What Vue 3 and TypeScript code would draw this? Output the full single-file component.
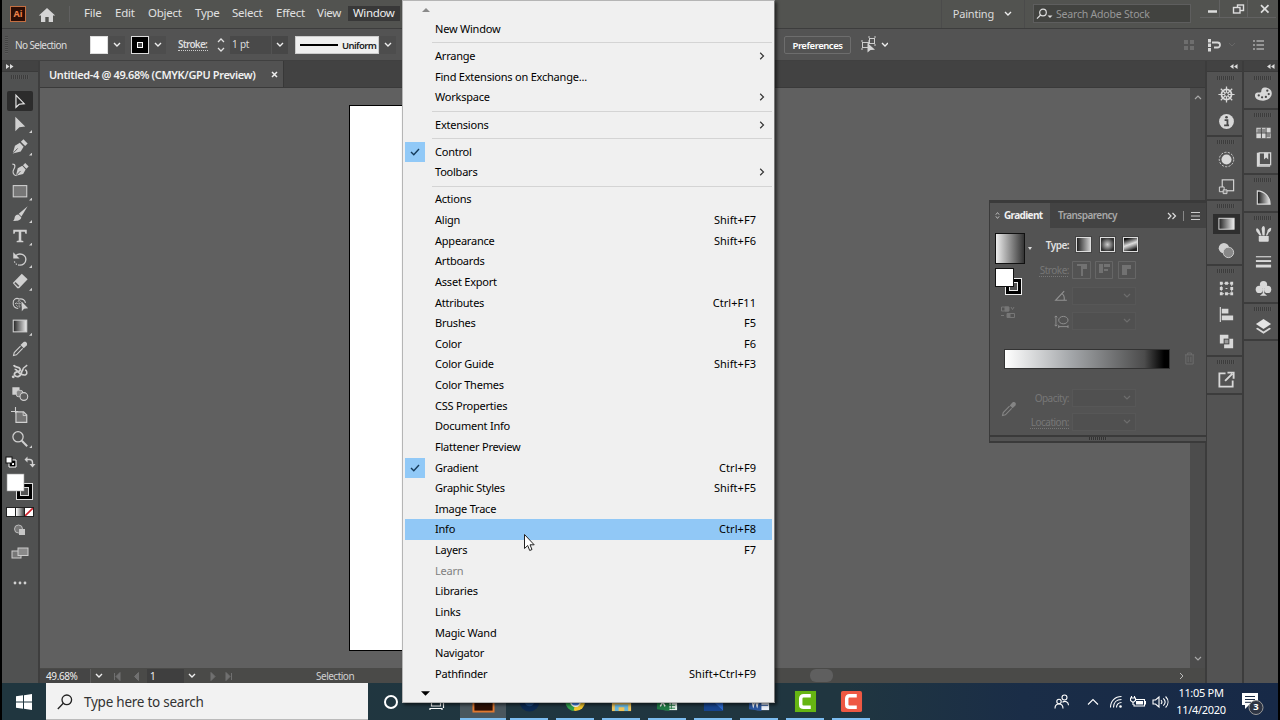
<script setup lang="ts">
interface MenuRow { label?: string; key?: string; sub?: boolean; checked?: boolean; hot?: boolean; off?: boolean; sep?: boolean }
interface Tool { name: string; art: string; more?: boolean; active?: boolean }
interface DockIcon { name: string; art: string; active?: boolean }

const menus = [
  { t: 'File', w: 31 }, { t: 'Edit', w: 33 }, { t: 'Object', w: 47 }, { t: 'Type', w: 37 },
  { t: 'Select', w: 44 }, { t: 'Effect', w: 41 }, { t: 'View', w: 32 }, { t: 'Window', w: 52, open: true },
]

const rows: MenuRow[] = [
  { label: 'New Window' }, { sep: true },
  { label: 'Arrange', sub: true }, { label: 'Find Extensions on Exchange...' }, { label: 'Workspace', sub: true }, { sep: true },
  { label: 'Extensions', sub: true }, { sep: true },
  { label: 'Control', checked: true }, { label: 'Toolbars', sub: true }, { sep: true },
  { label: 'Actions' }, { label: 'Align', key: 'Shift+F7' }, { label: 'Appearance', key: 'Shift+F6' },
  { label: 'Artboards' }, { label: 'Asset Export' }, { label: 'Attributes', key: 'Ctrl+F11' },
  { label: 'Brushes', key: 'F5' }, { label: 'Color', key: 'F6' }, { label: 'Color Guide', key: 'Shift+F3' },
  { label: 'Color Themes' }, { label: 'CSS Properties' }, { label: 'Document Info' }, { label: 'Flattener Preview' },
  { label: 'Gradient', key: 'Ctrl+F9', checked: true }, { label: 'Graphic Styles', key: 'Shift+F5' },
  { label: 'Image Trace' }, { label: 'Info', key: 'Ctrl+F8', hot: true }, { label: 'Layers', key: 'F7' },
  { label: 'Learn', off: true }, { label: 'Libraries' }, { label: 'Links' }, { label: 'Magic Wand' },
  { label: 'Navigator' }, { label: 'Pathfinder', key: 'Shift+Ctrl+F9' },
]

const tools: Tool[] = [
  { name: 'selection', active: true, art: '<path d="M5.5 3.5V17l3.6-3.4 5.6-.6z" fill="none" stroke="#e8e8e8" stroke-width="1.3"/>' },
  { name: 'direct', more: true, art: '<path d="M4.800 2V18l4.500-4.500 6.500-.8z" fill="#d0d0d0"/>' },
  { name: 'pen', more: true, art: '<path d="M2 18.300l2.400-8.600 5.400-3.300 4.200 4.300-3.200 5.300z" fill="#d0d0d0"/><path d="M2.600 17.700l4.800-5" stroke="#535353"/><path d="M11 5.400l2.800-2.800 4.700 4.700-2.800 2.800z" fill="#d0d0d0"/>' },
  { name: 'curvature', art: '<path d="M5.500 17.500l2-8.200 5-2.800 3.800 4-2.800 5z" fill="#d0d0d0"/><path d="M13.300 5.700l2.500-2.500 3.800 4-2.500 2.400z" fill="#d0d0d0"/><path d="M6 17l4.600-4.800" stroke="#535353"/><path d="M1.500 4.500c4 0 3 3.500 1.500 6s-1 6 3 7" fill="none" stroke="#d0d0d0" stroke-width="1.300"/>' },
  { name: 'rectangle', more: true, art: '<rect x="2.500" y="4" width="15" height="12.500" fill="#777" stroke="#d0d0d0" stroke-width="1.200"/>' },
  { name: 'brush', more: true, art: '<path d="M18.500 1.500L8.600 9.800l3 3z" fill="#d0d0d0"/><path d="M8.200 10.500l3.200 3.200c-.3 3.500-4.700 4.400-9.400 3.900 2.200-1 1.600-3.100 2.400-4.900.8-1.500 2.300-2.400 3.800-2.200z" fill="#d0d0d0"/>' },
  { name: 'type', more: true, art: '<path d="M2.500 3h15v4.500H16l-.7-2.300h-3.900v9.900l2.300.5v1.300H6.300v-1.300l2.300-.5V5.200H4.700L4 7.500H2.500z" fill="#d0d0d0"/>' },
  { name: 'rotate', more: true, art: '<path d="M5.500 6.200c4-3.500 11-1.200 11 4.300 0 4-3.500 6.500-7 6.300" fill="none" stroke="#d0d0d0" stroke-width="1.500"/><path d="M9.500 16.800c-3 0-5.500-2.200-6-5.300" fill="none" stroke="#d0d0d0" stroke-width="1.300" stroke-dasharray="1.500 1.500"/><path d="M2.500 2.500v7h7z" fill="#d0d0d0"/>' },
  { name: 'eraser', more: true, art: '<path d="M2 12.200L12 2l6.500 6-9.500 10H7z" fill="#d0d0d0"/><path d="M5 11.200l4.300 4.200-1.400 1.400-4.200-4.200z" fill="#5a5a5a"/>' },
  { name: 'shape-builder', art: '<path d="M2.500 9a4.300 4.300 0 0 1 6.500-4.500c4-1 7 1.500 7 4.500M8 15c-3.500 0-6-2.500-5.500-6" fill="none" stroke="#d0d0d0" stroke-width="1.200"/><path d="M4.500 9.500h8M9 5.500v8" stroke="#d0d0d0" stroke-width="1" stroke-dasharray="1 1"/><circle cx="9" cy="10" r="3.300" fill="none" stroke="#d0d0d0" stroke-dasharray="1 1"/><path d="M12 7.500V18l2.500-2.800 4.500-.4z" fill="#d0d0d0"/>' },
  { name: 'gradient', more: true, art: '<defs><linearGradient id="tg"><stop stop-color="#222"/><stop offset="1" stop-color="#eee"/></linearGradient></defs><rect x="2.500" y="3.500" width="15" height="13" fill="url(#tg)" stroke="#d0d0d0" stroke-width="1.200"/>' },
  { name: 'eyedropper', art: '<path d="M10.500 5.600l3.200-3.200c2.800-1.500 5.200 1.200 3.700 3.700L14.200 9.300z" fill="#d0d0d0"/><path d="M10.600 6.800l-7 7.200-.8 3.200 3.200-.8 7-7.200" fill="none" stroke="#d0d0d0" stroke-width="1.200"/>' },
  { name: 'puppet', art: '<path d="M3 3.500c1 3 6 1.500 7 4s-1 3-3.500 3.500S2.500 14 5 15.500s5 .5 6-2 1-5 3-5.500" fill="none" stroke="#d0d0d0" stroke-width="2"/><path d="M4 8c3 0 3 3 5.500 4.500s5 3 7 1.500 1-5-1-5" fill="none" stroke="#d0d0d0" stroke-width="1.700"/><path d="M13 7.500l5-4" stroke="#d0d0d0" stroke-width="1.500"/><circle cx="2.500" cy="16.500" r="1.600" fill="#d0d0d0"/>' },
  { name: 'blend', art: '<path d="M1.500 2.500h8v3.200H7.500v5h-6z" fill="#d0d0d0"/><rect x="6" y="6" width="7" height="7" rx="2" fill="#888" stroke="#ccc"/><circle cx="14.300" cy="12.800" r="4.300" fill="#5c5c5c" stroke="#d0d0d0" stroke-width="1.200"/>' },
  { name: 'artboard', art: '<path d="M5 0v7M0 5h8" stroke="#d0d0d0" stroke-width="1.200"/><path d="M5.500 5.500h8.500l3.500 3.500v8h-12z" fill="#747474" stroke="#d0d0d0" stroke-width="1.300"/><path d="M13.500 5.500v4h4" fill="none" stroke="#d0d0d0"/>' },
  { name: 'zoom', more: true, art: '<circle cx="7.800" cy="7.600" r="5.700" fill="none" stroke="#d0d0d0" stroke-width="1.400"/><path d="M12 12l6 6" stroke="#d0d0d0" stroke-width="2.200"/>' },
]

const dockA: DockIcon[][] = [
  [
    { name: 'navigator', art: '<circle cx="10" cy="10" r="5.300" fill="none" stroke="#d8d8d8" stroke-width="1.900"/><path d="M10 1.500v17M1.500 10h17M4 4l12 12M16 4L4 16" stroke="#d8d8d8" stroke-width="1.300"/><circle cx="10" cy="10" r="2" fill="#535353" stroke="#d8d8d8"/>' },
    { name: 'info', art: '<circle cx="10" cy="10" r="7.800" fill="#d8d8d8"/><path d="M8 8.500h3v5M7.500 14h5.200" fill="none" stroke="#484848" stroke-width="1.900"/><circle cx="10" cy="5.500" r="1.400" fill="#484848"/>' },
  ],
  [
    { name: 'appearance', art: '<circle cx="10" cy="10" r="5.300" fill="#d8d8d8"/><circle cx="10" cy="10" r="7.600" fill="none" stroke="#d8d8d8" stroke-dasharray="2.200 1.500"/>' },
    { name: 'export', art: '<rect x="5.500" y="3" width="12" height="11.500" fill="none" stroke="#d8d8d8" stroke-width="1.200"/><path d="M2.500 10.500h5v5h-5z" fill="#535353" stroke="#d8d8d8"/><path d="M6.500 13.500h4v4h-4z" fill="#777" stroke="#d8d8d8"/>' },
  ],
  [
    { name: 'gradient', active: true, art: '<defs><linearGradient id="dg"><stop stop-color="#222"/><stop offset="1" stop-color="#eee"/></linearGradient></defs><rect x="2" y="4.500" width="16" height="11.500" fill="url(#dg)" stroke="#ddd"/>' },
    { name: 'transparency', art: '<circle cx="7.300" cy="7.500" r="5.500" fill="#d0d0d0"/><circle cx="12" cy="12" r="5.500" fill="#888" stroke="#d0d0d0"/>' },
  ],
  [
    { name: 'transform', art: '<rect x="4.500" y="4.500" width="11" height="11" fill="none" stroke="#d8d8d8" stroke-dasharray="2 1"/><path d="M3 3h3v3H3zM14 3h3v3h-3zM3 14h3v3H3zM14 14h3v3h-3zM8.500 3h3v3h-3zM8.500 14h3v3h-3zM3 8.500h3v3H3zM14 8.500h3v3h-3z" fill="#d8d8d8"/><path d="M9 10h2" stroke="#d8d8d8"/>' },
    { name: 'align', art: '<path d="M3.500 2v16" stroke="#d8d8d8" stroke-width="1.200"/><path d="M5 4h7v5H5zM5 11h12v5H5z" fill="#d8d8d8"/>' },
    { name: 'pathfinder', art: '<path d="M3 3h9v4h5v10H7.500v-5H3z" fill="#d8d8d8"/><rect x="7.500" y="7.500" width="5" height="5" fill="#999" stroke="#444"/>' },
  ],
  [{ name: 'asset', art: '<path d="M9 3.500H2.500v14h14V11" fill="none" stroke="#d8d8d8" stroke-width="1.900"/><path d="M8.500 11.500L16 4M11 2.800h6.500v6.500" fill="none" stroke="#d8d8d8" stroke-width="2"/>' }],
]

const dockB: DockIcon[][] = [
  [{ name: 'color', art: '<path d="M11 2.500c5 0 8 3 7.700 6.800-.5 4.500-4.300 7.200-9.200 7.200-5.300 0-8.500-2.500-8.500-5.500 0-2.200 1.500-3.400 3.500-3.200 2 .3 3.500-.2 3.200-2C8 4 9 2.500 11 2.500z" fill="#d8d8d8"/><g fill="#484848"><circle cx="5" cy="11" r="1.200"/><circle cx="8.500" cy="13" r="1.200"/><circle cx="12.500" cy="12.500" r="1.200"/><circle cx="15.500" cy="9.500" r="1.200"/><circle cx="14" cy="6" r="1.200"/></g>' }],
  [
    { name: 'swatches', art: '<rect x="2.500" y="5" width="15" height="11" fill="#d8d8d8"/><path d="M3.500 6h4v4h-4zM13 11h4v4h-4zM8.500 6h3.500v4H8.500z" fill="#888"/><path d="M2.500 10.500h15M7.800 5v11M12.700 5v11" stroke="#484848"/>' },
    { name: 'libraries', art: '<path d="M3 3h2.500v13H17v1.500H3z" fill="#d8d8d8"/><rect x="5.500" y="3" width="12" height="12.500" fill="none" stroke="#d8d8d8" stroke-width="1.300"/><path d="M10.500 3h4.500v7l-2.200-2-2.300 2z" fill="#d8d8d8"/>' },
  ],
  [{ name: 'guide', art: '<defs><linearGradient id="qg"><stop stop-color="#111"/><stop offset="1" stop-color="#eee"/></linearGradient></defs><path d="M3.500 3c7 0 13.500 6 13.500 14H3.500z" fill="url(#qg)" stroke="#d8d8d8" stroke-width="1.200"/>' }],
  [
    { name: 'brushes', art: '<path d="M5 11.500h10.500v5q0 1-1 1H6q-1 0-1-1zM6 11L2.500 6.500q-1-3 1-3Q6 5 6.500 8L8 11zM9 11L8 4q.5-3 2-3t1.500 3l-.3 7zM12.500 11l1.500-4q0-3 4-4 .5 4-2.500 5L14 11z" fill="#d8d8d8"/>' },
    { name: 'stroke', art: '<path d="M2 5h16" stroke="#d8d8d8" stroke-width="1.200"/><path d="M2 9.500h16" stroke="#d8d8d8" stroke-width="2"/><path d="M2 14.800h16" stroke="#d8d8d8" stroke-width="3"/>' },
    { name: 'symbols', art: '<circle cx="10" cy="5.800" r="3.800" fill="#d8d8d8"/><circle cx="5.600" cy="11" r="3.800" fill="#d8d8d8"/><circle cx="14.400" cy="11" r="3.800" fill="#d8d8d8"/><path d="M9.200 8h1.600v7l3 2.500H6.200l3-2.500z" fill="#d8d8d8"/>' },
  ],
  [{ name: 'layers', art: '<path d="M10 2l8 5.300-8 5.200-8-5.200z" fill="#e4e4e4"/><path d="M3.800 11.200L10 15.200l6.200-4L18 12.400l-8 5.300-8-5.300z" fill="#d8d8d8"/>' }],
]

const apps = [
  { name: 'ai', front: true, art: '<rect x="1.500" y="1.500" width="21" height="21" fill="#2b0f05" stroke="#e0782e" stroke-width="2"/>' },
  { name: 'ps', art: '<circle cx="12" cy="12" r="10.500" fill="#0c2a52"/><circle cx="12" cy="12" r="5" fill="#1d4a80"/>' },
  { name: 'chrome', art: '<circle cx="12" cy="12" r="10" fill="#f2c62e"/><path d="M12 12L3 7a10 10 0 0 0 7 15z" fill="#2fa04c"/><path d="M3 7a10 10 0 0 1 18 0z" fill="#dc4437"/><circle cx="12" cy="12" r="5" fill="#4486f4" stroke="#fff" stroke-width="1.500"/>' },
  { name: 'explorer', art: '<path d="M2 4h20v18H2z" fill="#eec35a"/><path d="M5 15h14v7h-4v-4H9v4H5z" fill="#67b6dc"/>' },
  { name: 'excel', art: '<rect x="9" y="2" width="13" height="19" fill="#e7f2eb"/><path d="M11 16h9M11 19h9M16 8v12" stroke="#237a45"/><path d="M1 4l13-2v20L1 20z" fill="#1f7a44"/><path d="M4.500 8l5 9M9.500 8l-5 9" stroke="#fff" stroke-width="1.500"/>' },
  { name: 'mail', art: '<path d="M2 3h20v19z" fill="#2c67c8"/><path d="M2 3v19h20z" fill="#17448d"/>' },
  { name: 'word', art: '<rect x="9" y="2" width="13" height="19" fill="#e9eef7"/><path d="M13 8h8M13 12h8M13 16h8" stroke="#244f94"/><path d="M1 4l13-2v20L1 20z" fill="#2a569d"/><path d="M3.500 9l2 8 2-6 2 6 2-8" fill="none" stroke="#fff" stroke-width="1.300"/>' },
  { name: 'camtasia', art: '<rect x="1" y="1" width="22" height="22" fill="#66b512"/><path d="M17.500 6h-7.500q-3 0-3 3v6q0 3 3 3h7.500" fill="none" stroke="#fff" stroke-width="3.600"/>' },
  { name: 'recorder', art: '<rect x="1" y="1" width="22" height="22" rx="2" fill="#ee5843"/><path d="M17.500 6h-7.500q-3 0-3 3v6q0 3 3 3h7.500" fill="none" stroke="#fff" stroke-width="3.600"/>' },
]
</script>

<template>
  <div class="screen">
    <header class="titlebar">
      <span class="ai">Ai</span>
      <svg class="home" viewBox="0 0 18 16"><path d="M9 1L.8 8.500H3V15h4.300v-5h3.400v5H15V8.500h2.200z" fill="#d4d4d4" /></svg>
      <i class="vline" />
      <nav class="menus">
        <span v-for="m in menus" :key="m.t" :class="{ open: m.open }" :style="{ width: m.w + 'px' }">{{ m.t }}</span>
      </nav>
      <div class="titleright">
        <div class="painting"><span>Painting</span><svg viewBox="0 0 8 6"><path d="M1 1l3 3 3-3" /></svg></div>
        <div class="stock">
          <svg viewBox="0 0 18 12"><circle cx="7" cy="4.500" r="3.300" /><path d="M4.600 7L1 10.700" /><path d="M11.500 7.500h5l-2.500 2.500z" fill="#ddd" stroke="none" /></svg>
          <span>Search Adobe Stock</span>
        </div>
        <svg class="winbtns" viewBox="0 0 78 28">
          <path d="M19.500 0v17M47.500 0v17M0 17.500h76" stroke="#626262" fill="none" />
          <path d="M8 11.500h9" stroke="#ddd" stroke-width="2.500" />
          <g fill="#535353" stroke="#ddd" stroke-width="1.400"><rect x="37.500" y="5" width="6" height="5.500" /><rect x="33.500" y="7.500" width="6.500" height="5.500" /></g>
          <path d="M61 5.200l7.500 7.500M68.500 5.200L61 12.700" stroke="#ddd" stroke-width="1.700" />
        </svg>
      </div>
    </header>

    <div class="control">
      <i class="hgrip" />
      <span class="nosel">No Selection</span>
      <i class="fillbox" />
      <span class="drop"><svg viewBox="0 0 8 6"><path d="M1 1l3 3 3-3" /></svg></span>
      <i class="strokebox"><b /></i>
      <span class="drop"><svg viewBox="0 0 8 6"><path d="M1 1l3 3 3-3" /></svg></span>
      <span class="strokelabel">Stroke:</span>
      <svg class="spin" viewBox="0 0 10 16"><path d="M2 5l3-3 3 3M2 11l3 3 3-3" /></svg>
      <span class="pt">1 pt</span>
      <span class="drop pd"><svg viewBox="0 0 8 6"><path d="M1 1l3 3 3-3" /></svg></span>
      <span class="uniform"><i />Uniform</span>
      <span class="drop"><svg viewBox="0 0 8 6"><path d="M1 1l3 3 3-3" /></svg></span>
      <div class="ctlright">
        <span class="pref">Preferences</span>
        <svg class="seltool" viewBox="0 0 28 18"><g fill="none" stroke="#ccc"><rect x="2.500" y="6.500" width="6" height="5" /><rect x="9.500" y="2.500" width="5" height="5" /><path d="M1 5h2M8 5h2M1 13h2M8 1h2M14 1h2M14 9h2" /></g><path d="M7.500 7v9.500l3-2.500 4.500-.2z" fill="#d4d4d4" /><path d="M22 7l3 3 3-3" fill="none" stroke="#eee" stroke-width="1.400" /></svg>
        <svg class="ctlend" viewBox="0 0 84 16"><path d="M1 3h4v4H1zM7 3h4v4H7zM1 9h4v4H1zM7 9h4v4H7z" fill="#6e6e6e" /><path d="M25 2h3v3.500h-3zM25 6.500h3V10h-3zM25 11h3v3.500h-3z" fill="#d8d8d8" /><path d="M29 5.500h5.500a2.500 2.500 0 0 1 0 5H31" fill="none" stroke="#d8d8d8" stroke-width="1.800" /><path d="M46 6l3 3 3-3" fill="none" stroke="#666" /><path d="M70 4h2M70 8h2M70 12h2M73.500 4H81M73.500 8H81M73.500 12H81" stroke="#d8d8d8" stroke-width="1.200" /></svg>
      </div>
    </div>

    <main class="work">
      <aside class="toolbar">
        <div class="dockhead"><svg viewBox="0 0 8 5"><path d="M0 0l3.500 2.500L0 5zM4 0l3.500 2.500L4 5z" /></svg></div>
        <i class="grip" />
        <div class="tools">
          <div v-for="t in tools" :key="t.name" class="tool" :class="{ active: t.active }">
            <svg viewBox="0 0 20 20" v-html="t.art" />
            <i v-if="t.more" class="corner" />
          </div>
        </div>
        <div class="swaprow">
          <svg viewBox="0 0 12 12"><path d="M4 4h7v7H4z" fill="#000" stroke="#fff" /><path d="M7 7h2v2H7z" fill="#fff" /><rect x="1" y="1" width="6" height="6" fill="#fff" stroke="#111" /></svg>
          <svg viewBox="0 0 12 12"><path d="M3 3.500h2.500q3 0 3 3V9" fill="none" stroke="#d0d0d0" stroke-width="1.400" /><path d="M3.500.5v6L.5 3.500zM5.500 8h6l-3 3.500z" fill="#d0d0d0" /></svg>
        </div>
        <svg class="fillstroke" viewBox="0 0 28 28"><rect x="10.500" y="10.500" width="16" height="16" fill="#000" stroke="#ddd" /><rect x="14.500" y="14.500" width="8" height="8" fill="#535353" stroke="#ddd" /><rect x="1" y="1" width="17" height="17" fill="#fff" stroke="#999" stroke-width=".6" /></svg>
        <div class="modes"><i class="m1" /><i class="m2" /><svg viewBox="0 0 8 8"><rect width="8" height="8" fill="#fff" /><path d="M0 8L8 0" stroke="#d1222c" stroke-width="1.600" /></svg></div>
        <svg class="drawmode" viewBox="0 0 14 14"><circle cx="5.500" cy="6" r="4" fill="#777" stroke="#bbb" /><rect x="6" y="6" width="6" height="6" fill="#c6c6c6" /></svg>
        <svg class="screenmode" viewBox="0 0 18 12"><rect x="1" y="4" width="9" height="7" fill="#777" stroke="#ccc" /><rect x="7" y="1" width="10" height="7.500" fill="#8a8a8a" stroke="#ccc" /></svg>
        <svg class="dots" viewBox="0 0 14 4"><circle cx="2" cy="2" r="1.400" /><circle cx="7" cy="2" r="1.400" /><circle cx="12" cy="2" r="1.400" /></svg>
      </aside>

      <section class="doc">
        <div class="tabs">
          <div class="tab"><span>Untitled-4 @ 49.68% (CMYK/GPU Preview)</span><svg viewBox="0 0 7 7"><path d="M1 1l5 5M6 1L1 6" /></svg></div>
        </div>
        <div class="stage">
          <div class="canvas"><div class="artboard" /></div>
          <div class="vscroll">
            <svg viewBox="0 0 8 6"><path d="M1 5l3-3 3 3" /></svg>
            <svg viewBox="0 0 8 6"><path d="M1 1l3 3 3-3" /></svg>
          </div>
        </div>
        <div class="status">
          <span class="zoomval">49.68%</span>
          <span class="sdrop"><svg viewBox="0 0 8 6"><path d="M1 1l3 3 3-3" /></svg></span>
          <svg class="pager" viewBox="0 0 40 10"><path d="M8 2v7M13.500 1.500v8L9.500 5.500zM32 1.500v8L28 5.500z" /></svg>
          <span class="page">1</span>
          <span class="sdrop"><svg viewBox="0 0 8 6"><path d="M1 1l3 3 3-3" /></svg></span>
          <svg class="pager next" viewBox="0 0 40 10"><path d="M9.500 1.500v8L13.500 5.500zM24.500 1.500v8L28.500 5.500zM30 2v7" /></svg>
          <span class="sel">Selection</span>
          <i class="hthumb" />
          <svg class="harrow" viewBox="0 0 6 8"><path d="M1 1l3 3-3 3" /></svg>
        </div>
      </section>

      <aside v-for="(dock, d) in [dockA, dockB]" :key="d" class="dock">
        <div class="dockhead r"><svg viewBox="0 0 8 5"><path d="M3.500 0L0 2.500 3.500 5zM7.500 0L4 2.500 7.500 5z" /></svg></div>
        <div v-for="(g, n) in dock" :key="n" class="group">
          <i class="grip" />
          <div v-for="ic in g" :key="ic.name" class="dicon" :class="{ active: ic.active }"><svg viewBox="0 0 20 20" v-html="ic.art" /></div>
        </div>
      </aside>
    </main>

    <footer class="taskbar">
      <div class="start"><svg viewBox="0 0 16 16"><path d="M0 2.300L7 1.300v6.200H0zM8 1.200L16 0v7.500H8zM0 8.500h7v6.200L0 13.700zM8 8.500h8V16l-8-1.200z" fill="#fff" /></svg></div>
      <div class="search"><svg viewBox="0 0 16 16"><circle cx="9.800" cy="5.800" r="4.800" /><path d="M6.300 9.300L.8 15" /></svg><span>Type here to search</span></div>
      <div class="slot"><svg viewBox="0 0 16 16" class="cortana"><circle cx="8" cy="8" r="6" /></svg></div>
      <div class="slot tv"><svg viewBox="0 0 18 16" class="taskview"><path d="M3.500 4h9v8h-9zM15.500 2v12M2 0v1.500h12V0M2 16v-1.500h12V16" /></svg></div>
      <div v-for="a in apps" :key="a.name" class="slot app" :class="{ front: a.front }"><svg viewBox="0 0 24 24" v-html="a.art" /></div>
      <div class="tray">
        <svg class="people" viewBox="0 0 16 16"><circle cx="5" cy="7.500" r="2.200" /><path d="M1 14.500c0-6 8-6 8 0" /><circle cx="10.500" cy="3.500" r="2.500" /><path d="M8.500 8.300c2.500-2 6-.5 6 3" /></svg>
        <svg class="up" viewBox="0 0 12 8"><path d="M1 6.500l5-5 5 5" /></svg>
        <svg class="wifi" viewBox="0 0 14 14"><path d="M1.500 12.500C1.500 6 6 1.500 12.500 1.500M4.500 12.500c0-5 3-8 8-8M7.500 12.500c0-3 2-5 5-5" /><circle cx="11.500" cy="11.500" r="1.300" fill="#fff" stroke="none" /></svg>
        <svg class="batt" viewBox="0 0 16 12"><path d="M5 3.500h9.500V10H4V8M14.500 5.500h1v2.500h-1" /><path d="M6 5h7v3.500H6z" fill="#fff" stroke="none" /><path d="M1.500 0v2M4.500 0v2M.5 2h5v2.500l-2.500 2-2.500-2zM3 6v3" /></svg>
        <svg class="vol" viewBox="0 0 17 14"><path d="M1 5h2.500L7 2v10L3.500 9H1zM9 5c1.200 1.300 1.200 2.700 0 4M11.300 3.300c2.200 2.200 2.200 5.200 0 7.400M13.600 1.500c3.200 3.300 3.200 7.700 0 11" /></svg>
        <div class="clock"><span>11:05 PM</span><span>11/4/2020</span></div>
        <div class="note"><svg viewBox="0 0 24 24"><path d="M1 1h16v12h-9l-4 4v-4H1z" fill="#fff" /><path d="M4 4.500h10M4 7.500h10M4 10.300h6" stroke="#1a2b45" /><circle cx="15" cy="15.500" r="7" fill="#2d3443" stroke="#999" /></svg><b>3</b></div>
      </div>
    </footer>

    <section class="panel">
      <div class="phead">
        <div class="ptab"><svg viewBox="0 0 6 10"><path d="M1 4l2-2.500L5 4M1 6l2 2.500L5 6" /></svg><span>Gradient</span></div>
        <span class="ptrans">Transparency</span>
        <svg class="pmore" viewBox="0 0 34 12"><path d="M1 3l3 3-3 3M5.500 3l3 3-3 3" stroke="#ddd" stroke-width="1.200" /><path d="M16.500 1v10" stroke="#888" /><path d="M24 2.500h9M24 6h9M24 9.500h9" stroke="#ccc" /></svg>
      </div>
      <div class="pbody">
        <div class="pleft">
          <div class="swline"><i class="bigsw" /><i class="tri" /></div>
          <svg class="pfs" viewBox="0 0 28 28"><rect x="10.500" y="10.500" width="16" height="16" fill="#000" stroke="#eee" /><rect x="14.500" y="14.500" width="8" height="8" fill="#535353" stroke="#eee" /><rect x=".5" y=".5" width="18" height="18" fill="#fff" stroke="#111" /></svg>
          <svg class="rev" viewBox="0 0 14 12"><path d="M.5 1h7v4h-7zM6.500 7.500h7v4h-7zM10 1l1.500 2.500L13 1M0 9.500h3" /><path d="M4 1h4v4H4zM6 7.500h3v4H6z" fill="#777" /></svg>
        </div>
        <div class="pright">
          <div class="prow on"><label>Type:</label><i class="gt lin" /><i class="gt rad" /><i class="gt free" /></div>
          <div class="prow"><label class="ul">Stroke:</label>
            <svg class="stk" viewBox="0 0 64 18"><path d="M.5.500h18v17H.5zM23.500.500h17v17h-17zM46.500.500h17v17h-17z" fill="none" stroke="#666" /><path d="M5 3h10v5h-4v7H9V5H5zM27 3h4v9h-4zM32 3h6v3h-6zM32 8h4v2h-4zM50 4h9v4h-4v6h-5z" fill="#727272" /></svg>
          </div>
          <div class="prow"><label><svg viewBox="0 0 14 12"><path d="M12 10.500H1.500L9.500 2M7 4c2 1 3 3 2.500 6.500" /></svg></label><span class="fld"><svg viewBox="0 0 8 6"><path d="M1 1l3 3 3-3" /></svg></span></div>
          <div class="prow"><label><svg viewBox="0 0 16 14"><ellipse cx="10" cy="5.500" rx="5" ry="4" /><path d="M2 1v11M.5 2.500L2 1l1.500 1.500M.5 10.500L2 12l1.500-1.500M5 12.500h10M5 11v3M15 11v3" /></svg></label><span class="fld"><svg viewBox="0 0 8 6"><path d="M1 1l3 3 3-3" /></svg></span></div>
        </div>
      </div>
      <div class="rampline"><i class="ramp" /><svg viewBox="0 0 12 14"><path d="M1 3h10M4 3V1h4v2M2 3v10h8V3M4.500 5v6M7.500 5v6" /></svg></div>
      <div class="plow">
        <svg viewBox="0 0 20 20"><path d="M10.800 6l3-3.200c2.500-1.500 4.800 1 3.400 3.200L14 9.200z" fill="#858585" /><path d="M10.600 6.800l-7 7.200-.8 3.200 3.200-.8 7-7.200" fill="none" stroke="#858585" stroke-width="1.200" /></svg>
        <div>
          <div class="prow"><label>Opacity:</label><span class="fld"><svg viewBox="0 0 8 6"><path d="M1 1l3 3 3-3" /></svg></span></div>
          <div class="prow"><label class="ul">Location:</label><span class="fld"><svg viewBox="0 0 8 6"><path d="M1 1l3 3 3-3" /></svg></span></div>
        </div>
      </div>
      <div class="pfoot"><i /></div>
    </section>

    <div class="dropdown">
      <div class="more"><svg viewBox="0 0 8 4"><path d="M0 4l4-4 4 4z" fill="#8a8a8a" /></svg></div>
      <template v-for="(r, i) in rows" :key="i">
        <div v-if="r.sep" class="sep"><i /></div>
        <div v-else class="item" :class="{ hot: r.hot, off: r.off }">
          <span class="check" :class="{ ck: r.checked }"><svg v-if="r.checked" viewBox="0 0 10 8"><path d="M1 4l2.800 2.800L9 1" /></svg></span>
          <span class="label">{{ r.label }}</span>
          <span v-if="r.key" class="key">{{ r.key }}</span>
          <svg v-if="r.sub" class="subarrow" viewBox="0 0 6 8"><path d="M1.200 .8L4.500 4 1.200 7.200" /></svg>
        </div>
      </template>
      <div class="more end"><svg viewBox="0 0 8 4"><path d="M0 0h8L4 4z" fill="#000" /></svg></div>
    </div>

    <svg class="cursor" viewBox="0 0 13 20"><path d="M1.500 1.500v14l3.200-3 2 5 2.300-1-2-4.700h4.200z" fill="#fff" stroke="#222" stroke-width="1" /></svg>
  </div>
</template>

<style>
html, body { margin: 0; background: #000; overflow: hidden; }
</style>

<style scoped>
.screen { position: relative; width: 1280px; height: 720px; box-sizing: border-box; padding: 0 2px; background: #000; display: flex; flex-direction: column; overflow: hidden; font-family: "Noto Sans", "Open Sans", sans-serif; font-size: 11px; color: #dcdcdc; white-space: nowrap; }
.screen * { box-sizing: border-box; }
svg { display: block; flex: none; }
i, b { display: block; flex: none; }

.titlebar { height: 29px; flex: none; background: #525350; border-bottom: 1px solid #3d3d3d; display: flex; align-items: flex-start; }
.ai { width: 16px; height: 16px; margin: 6px 0 0 8px; border: 1px solid #c46f42; background: #2c0d05; color: #ec824b; font-weight: 700; font-size: 9px; line-height: 14px; text-align: center; }
.home { width: 18px; height: 16px; margin: 7px 0 0 12px; }
.vline { width: 1px; height: 16px; background: #606060; margin: 6px 0 0 13px; }
.menus { display: flex; font-size: 11.500px; letter-spacing: -.25px; padding-left: 8px; margin-top: 6px; }
.menus span { flex: none; padding-left: 6px; height: 15px; line-height: 13px; color: #e0e0e0; }
.menus span.open { margin-left: 0; padding-left: 5px; margin-left: 5px; background: #383838; color: #eee; letter-spacing: -.35px; }
.titleright { margin-left: auto; display: flex; height: 28px; }
.painting { display: flex; align-items: center; gap: 10px; font-size: 11px; border-right: 1px solid #4b4b4b; border-left: 1px solid #4b4b4b; padding: 0 12px 0 11px; letter-spacing: -.2px; }
.painting span { padding-bottom: 2px; }
.painting svg, .drop svg { width: 8px; height: 6px; fill: none; stroke: #eee; stroke-width: 1.4; }
.stock { width: 158px; height: 19px; margin: 4px 0 0 8px; background: #424340; border: 1px solid #5e5e5e; display: flex; align-items: center; color: #989898; font-size: 10.500px; letter-spacing: -.2px; }
.stock svg { width: 18px; height: 12px; margin: 0 2px 0 2px; fill: none; stroke: #ddd; stroke-width: 1.2; }
.winbtns { width: 78px; height: 28px; margin-left: 9px; }

.control { height: 32px; flex: none; background: #535353; border-bottom: 1px solid #404040; display: flex; align-items: center; padding-left: 3px; }
.hgrip { width: 3px; height: 18px; background: repeating-linear-gradient(#444 0 1px, #5a5a5a 1px 2px); }
.nosel { margin-left: 7px; width: 75px; font-size: 10px; letter-spacing: -.6px; }
.fillbox { width: 18px; height: 18px; background: #fff; border: 1px solid #ddd; }
.drop { width: 16px; height: 18px; margin: 0 0 0 1px; display: flex; align-items: center; justify-content: center; background: #4d4d4d; }
.strokebox { width: 18px; height: 18px; margin-left: 6px; background: #000; border: 1px solid #ddd; padding: 5px; }
.strokebox b { width: 6px; height: 6px; border: 1px solid #fff; background: #444; }
.strokelabel { margin-left: 12px; width: 30px; font-weight: 600; font-size: 10px; letter-spacing: -.75px; line-height: 12px; border-bottom: 1px dotted #ccc; }
.spin { width: 10px; height: 16px; margin-left: 8px; fill: none; stroke: #e0e0e0; stroke-width: 1.300; }
.pt { width: 41px; height: 18px; line-height: 17px; margin-left: 4px; background: #494949; padding-left: 2px; font-size: 10px; letter-spacing: -.2px; }
.pd { background: #474747; }
.uniform { margin-left: 7px; width: 84px; height: 18px; background: #f0f0f0; border: 1px solid #ccc; color: #222; display: flex; align-items: center; font-size: 9.500px; font-weight: 600; letter-spacing: -.6px; padding-top: 1px; }
.uniform i { width: 38px; height: 2px; background: #000; margin: 0 4px 0 4px; }
.ctlright { margin-left: auto; width: 494px; display: flex; align-items: center; }
.pref { width: 67px; height: 18px; border: 1px solid #6d6d6d; border-radius: 2px; line-height: 17px; text-align: center; color: #fff; font-size: 9.500px; font-weight: 600; letter-spacing: -.45px; }
.seltool { width: 28px; height: 18px; margin-left: 9px; }
.ctlend { width: 84px; height: 16px; margin-left: auto; margin-right: 11px; }

.work { flex: 1; min-height: 0; display: flex; background: #535353; }
.toolbar { width: 38px; border-right: 2px solid #3e3e3e; display: flex; flex-direction: column; align-items: center; background: #505151; }
.dockhead { align-self: stretch; height: 11px; flex: none; background: #424242; border-bottom: 1px solid #3a3a3a; padding: 3px 0 0 4px; }
.dockhead svg { width: 8px; height: 5px; fill: #ddd; }
.dockhead.r { padding: 3px 4px 0 0; display: flex; justify-content: flex-end; }
.grip { width: 18px; height: 4px; background: repeating-linear-gradient(90deg, #3c3c3c 0 1px, #575757 1px 2px); }
.toolbar > .grip { margin: 3px 0 11px; }
.tool { width: 36px; height: 22.530px; display: flex; align-items: center; justify-content: center; position: relative; }
.tool svg { width: 18px; height: 18px; }
.tool.active { width: 26px; height: 20px; margin: 1.260px auto; background: #2c2c2c; border-radius: 2px; }
.corner { position: absolute; right: 6px; bottom: 2px; background: #d0d0d0; width: 3px; height: 3px; clip-path: polygon(100% 0, 100% 100%, 0 100%); }
.swaprow { display: flex; gap: 7px; margin-top: 6px; }
.swaprow svg { width: 12px; height: 12px; }
.fillstroke { width: 28px; height: 28px; margin-top: 5px; }
.modes { display: flex; gap: 1px; margin-top: 6px; border: 1px solid #222; background: #222; }
.modes i, .modes svg { width: 8px; height: 8px; }
.m1 { background: #fff; }
.m2 { background: linear-gradient(90deg, #fff, #444); }
.drawmode { width: 14px; height: 14px; margin-top: 6px; }
.screenmode { width: 18px; height: 12px; margin-top: 10px; }
.dots { width: 14px; height: 4px; margin-top: 22px; fill: #d0d0d0; }

.doc { flex: 1; min-width: 0; display: flex; flex-direction: column; border-right: 2px solid #3c3c3c; }
.tabs { height: 27px; flex: none; background: #424242; border-bottom: 1px solid #3a3a3a; display: flex; }
.tab { width: 244px; background: #525252; display: flex; align-items: center; padding: 1px 0 0 9px; border-right: 1px solid #383838; color: #f0f0f0; font-weight: 600; font-size: 11px; letter-spacing: -.36px; }
.tab span { width: 222px; padding-bottom: 1px; }
.tab svg { width: 7px; height: 7px; stroke: #eee; stroke-width: 1.500; }
.stage { flex: 1; min-height: 0; display: flex; }
.canvas { flex: 1; background: #606060; padding: 17px 0 0 309px; }
.artboard { width: 421px; height: 546px; background: #fff; border: 1px solid #000; }
.vscroll { width: 15px; background: #4c4c4c; display: flex; flex-direction: column; justify-content: space-between; align-items: center; padding: 6px 0; }
.vscroll svg { width: 8px; height: 6px; fill: none; stroke: #a8a8a8; stroke-width: 1.200; }
.status { height: 15px; flex: none; background: #4a4a48; display: flex; align-items: center; font-size: 10px; overflow: hidden; letter-spacing: -.4px; }
.zoomval { width: 51px; padding-left: 6px; border-right: 1px solid #5d5d5d; color: #eee; background: #454545; }
.sdrop { width: 15px; display: flex; justify-content: center; }
.sdrop svg { width: 8px; height: 6px; fill: none; stroke: #eee; stroke-width: 1.400; }
.pager { width: 41px; height: 10px; fill: #707070; stroke: #707070; stroke-width: 1; }
.page { width: 37px; padding-left: 3px; background: #3f3f3f; color: #eee; }
.next { margin-left: 2px; }
.sel { width: 60px; margin-left: 74px; font-size: 10px; letter-spacing: -.5px; color: #d0d0d0; }
.hthumb { width: 23px; height: 13px; border-radius: 6px; background: #5f5f5f; margin-left: 434px; }
.harrow { width: 6px; height: 8px; margin-left: auto; margin-right: 20px; fill: none; stroke: #bbb; }

.dock { width: 37px; border-right: 2px solid #3c3c3c; background: #535353; }
.dock:last-child { width: 34px; border-right: 0; }
.dock:last-child .dockhead { padding-right: 3px; }
.group { border-bottom: 2px solid #3c3c3c; padding: 3px 0 .1px 3px; display: flex; flex-direction: column; align-items: center; }
.group .grip { margin-bottom: 2px; }
.dock .dockhead + .group { padding-top: 3.500px; }
.dock:last-child .group { padding-left: 4px; }
.dicon { width: 27px; height: 26.700px; display: flex; align-items: center; justify-content: center; }
.dicon svg { width: 19px; height: 19px; }
.dicon.active { height: 20px; margin: 3.350px 0; background: #2e2e2e; }

.taskbar { height: 37px; flex: none; display: flex; background: linear-gradient(90deg, #20363f 0, #203640 66%, #1a2d47 80%, #172947 100%); color: #fff; }
.start { width: 44px; display: flex; align-items: center; justify-content: center; padding-right: 1px; }
.start svg { width: 16px; height: 16px; }
.search { width: 322px; height: 37px; background: #f2f2f2; border-bottom: 1px solid #bbb; color: #333; display: flex; align-items: center; font-size: 13.500px; letter-spacing: -.25px; padding-top: 1px; }
.search svg { width: 16px; height: 16px; margin: 0 11px 0 11px; fill: none; stroke: #222; stroke-width: 1.300; }
.slot { width: 46px; display: flex; align-items: center; justify-content: center; }
.cortana { width: 16px; height: 16px; fill: none; stroke: #fff; stroke-width: 2; }
.taskview { width: 18px; height: 16px; fill: none; stroke: #fff; stroke-width: 1.200; }
.app { border: solid transparent; border-width: 0 4px; position: relative; background: linear-gradient(#7dbdf0, #7dbdf0) bottom / 100% 2px no-repeat; background-clip: padding-box; }
.app svg { width: 23px; height: 23px; }
.app.front { border-width: 0; background-color: #4a575e; }
.tray { margin-left: auto; display: flex; align-items: center; padding-right: 2px; }
.tray > svg { fill: none; stroke: #fff; stroke-width: 1.100; }
.people { width: 16px; height: 16px; margin-right: 17px; }
.up { width: 12px; height: 8px; margin-right: 10px; }
.wifi { width: 14px; height: 14px; margin-right: 7px; }
.batt { width: 16px; height: 12px; margin-right: 6px; }
.vol { width: 17px; height: 14px; margin-right: 5px; }
.clock { width: 54px; display: flex; flex-direction: column; align-items: center; font-size: 11px; line-height: 16.500px; letter-spacing: -.3px; }
.note { position: relative; width: 48px; height: 24px; margin-left: 0; }
.note svg { position: absolute; left: 13px; top: 2px; width: 24px; height: 24px; }
.note b { position: absolute; left: 23px; top: 10px; width: 10px; text-align: center; font-size: 9.500px; line-height: 14px; }

.panel { position: absolute; left: 989px; top: 200px; width: 218px; height: 243px; background: #535353; border: solid #3a3a3a; border-width: 3px 1px 2px 1px; display: flex; flex-direction: column; font-size: 10px; }
.phead { height: 25px; flex: none; background: #434343; display: flex; align-items: center; }
.phead span { padding-bottom: 2px; }
.ptab { width: 60px; height: 25px; background: #535353; display: flex; align-items: center; gap: 4px; padding-left: 5px; font-weight: 700; color: #f0f0f0; letter-spacing: -.65px; }
.ptab svg { width: 5px; height: 9px; fill: none; stroke: #ccc; }
.ptrans { margin-left: 8px; font-weight: 600; color: #a8a8a8; letter-spacing: -.55px; }
.pmore { width: 34px; height: 12px; margin-left: auto; margin-right: 5px; fill: none; }
.pbody { display: flex; height: 113px; }
.pleft { width: 43px; padding: 5px 0 0 5px; }
.swline { display: flex; align-items: center; gap: 3px; }
.bigsw { width: 30px; height: 31px; border: 1px solid #111; background: linear-gradient(90deg, #eee, #333); }
.tri { border: 2.500px solid transparent; border-top: 3px solid #ddd; border-bottom: 0; }
.pfs { width: 28px; height: 28px; margin-top: 4px; }
.rev { width: 14px; height: 12px; margin: 10px 0 0 6px; fill: none; stroke: #777; }
.pright { padding-top: 4px; }
.prow { height: 25.500px; display: flex; align-items: center; color: #777; }
.prow label { width: 36px; margin-right: 3px; display: flex; justify-content: flex-end; font-size: 10px; letter-spacing: -.5px; line-height: 12px; }
.prow label svg { width: 15px; height: 13px; fill: none; stroke: #929292; }
.ul { text-decoration: underline dotted; text-underline-offset: 2px; }
.on { color: #e0e0e0; font-weight: 600; }
.gt { width: 15px; height: 15px; border: 1px solid #ddd; margin-right: 8.500px; box-shadow: 0 0 0 1px #444; }
.gt:nth-of-type(1) { margin-left: 4px; }
.lin { background: linear-gradient(90deg, #222, #ccc); }
.rad { background: radial-gradient(circle, #ccc, #333 75%); }
.free { background: linear-gradient(160deg, #111 10%, #ddd 48%, #aaa 60%, #222 85%); }
.stk { width: 64px; height: 18px; }
.fld { width: 64px; height: 18px; background: #505050; border: 1px solid #575757; display: flex; justify-content: flex-end; align-items: center; padding-right: 4px; }
.fld svg { width: 8px; height: 6px; fill: none; stroke: #6d6d6d; stroke-width: 1.200; }
.rampline { height: 34px; padding: 8px 0 0 14px; display: flex; align-items: flex-start; gap: 14px; }
.ramp { width: 166px; height: 20px; border: 1px solid #333; background: linear-gradient(90deg, #fff, #a4a7aa 40%, #4c4c4c 85%, #000 97%); }
.rampline svg { width: 11px; height: 13px; margin-top: 3px; fill: none; stroke: #6e6e6e; }
.plow { display: flex; margin-top: 11px; }
.plow > svg { width: 18px; height: 18px; margin: 14px 0 0 10px; }
.plow .prow { height: 24px; }
.plow label { width: 48px; margin-left: 3px; margin-right: 3px; }
.pfoot { margin-top: auto; height: 6px; border-top: 2px solid #3a3a3a; display: flex; justify-content: center; }
.pfoot i { width: 18px; height: 3px; background: repeating-linear-gradient(90deg, #333 0 1px, #575757 1px 2px); }

.dropdown { position: absolute; left: 402px; top: 0; width: 373px; height: 703px; background: #f0f0f0; border: 1px solid #b5b5b5; border-right-color: #777; box-shadow: 2px 2px 3px rgba(0, 0, 0, .55); color: #000; font-size: 11px; padding: 0 2px; }
.more { height: 17.700px; padding: 7px 0 0 17px; }
.more svg { width: 8px; height: 4px; }
.more.end { padding: 7px 0 0 16px; }
.more.end svg { width: 9px; height: 5px; }
.item { height: 20.630px; display: flex; align-items: center; padding-right: 16px; letter-spacing: -.22px; }
.check { width: 20px; height: 20px; display: flex; align-items: center; justify-content: center; margin-right: 10px; }
.ck { background: #91c9f7; }
.check svg { width: 10px; height: 8px; fill: none; stroke: #163c5c; stroke-width: 1.400; }
.label { flex: 1; padding-bottom: 1px; }
.key { padding-bottom: 1px; letter-spacing: .05px; }
.hot { background: #91c8f6; }
.off { color: #808080; }
.subarrow { width: 6px; height: 8px; margin-right: -9px; fill: none; stroke: #333; stroke-width: 1.200; }
.sep { height: 6.500px; padding: 3px 0 0 27px; }
.sep i { height: 1px; background: #d4d4d4; }
.cursor { position: absolute; left: 523px; top: 533px; width: 13px; height: 20px; }
</style>
